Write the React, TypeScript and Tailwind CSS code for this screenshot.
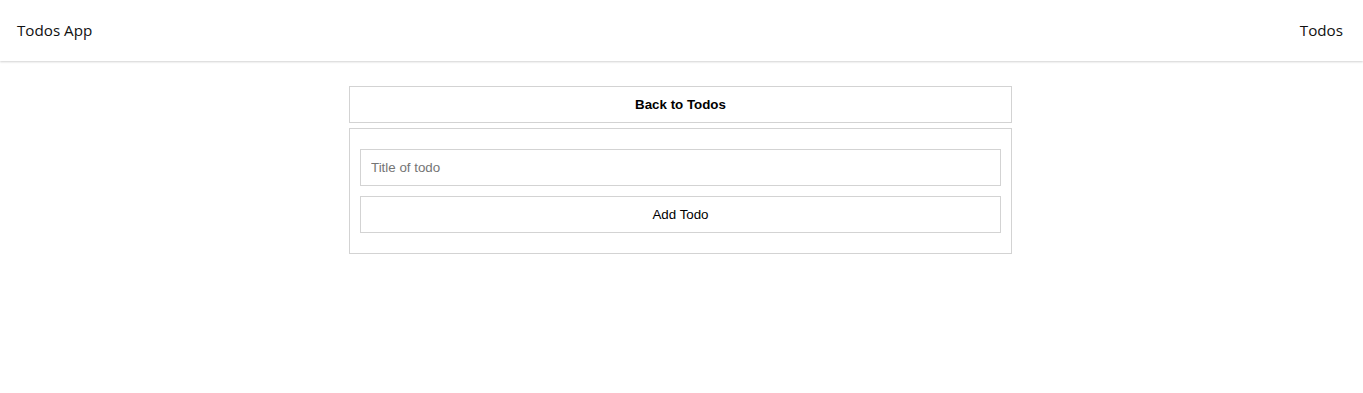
import { useState } from 'react'

export default function App() {
  const [title, setTitle] = useState('')

  return (
    <div className="min-h-screen bg-white">
      <header className="flex h-[61px] items-center justify-between px-[17px] shadow-[0_1px_2px_rgba(0,0,0,0.18)] font-['Open_Sans','Noto_Sans',sans-serif] text-[15.2px] text-[#111]">
        <span>Todos App</span>
        <span className="pr-[3px]">Todos</span>
      </header>

      <div className="flex justify-center pr-[2px]">
        <main className="mt-[25px] flex w-[663px] flex-col gap-[5px] font-['Liberation_Sans',Arial,sans-serif] text-[13.33px] text-black">
          <button className="h-[37px] w-full border border-[#d3d3d3] bg-white font-bold">
            Back to Todos
          </button>

          <form
            className="flex flex-col gap-[10px] border border-[#d3d3d3] px-[10px] py-[20px]"
            onSubmit={e => e.preventDefault()}
          >
            <input
              className="h-[37px] w-full border border-[#d3d3d3] px-[10px] outline-none placeholder:text-[#757575]"
              placeholder="Title of todo"
              value={title}
              onChange={e => setTitle(e.target.value)}
            />
            <button type="submit" className="h-[37px] w-full border border-[#d3d3d3] bg-white">
              Add Todo
            </button>
          </form>
        </main>
      </div>
    </div>
  )
}
